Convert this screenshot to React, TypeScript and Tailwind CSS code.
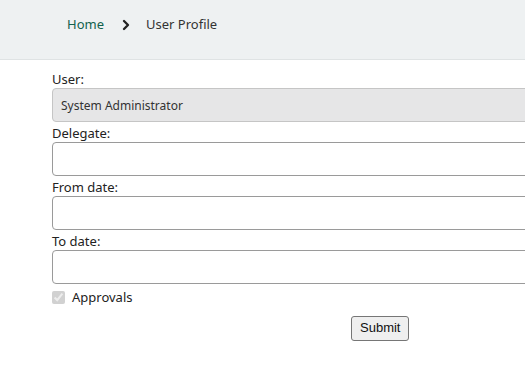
import { ChevronRight } from "lucide-react";

export default function App() {
  const fields = [
    { label: "User:", value: "System Administrator", disabled: true },
    { label: "Delegate:", value: "", disabled: false },
    { label: "From date:", value: "", disabled: false },
    { label: "To date:", value: "", disabled: false },
  ];

  return (
    <main className="w-screen h-screen overflow-hidden bg-white text-[#222] font-['Noto_Sans',sans-serif]">
      {/* Breadcrumb header */}
      <header className="h-[60px] bg-[#eef1f2] border-b border-[#dfe3e4] flex items-start pt-[15px] pl-[67px] text-[13px]">
        <a href="#" className="text-[#12614d]">Home</a>
        <ChevronRight size={16} strokeWidth={3.5} className="ml-[14px] mr-[12px] mt-[2px] text-[#222]" />
        <span className="text-[#333]">User Profile</span>
      </header>

      {/* Form */}
      <form className="pl-[52px] pt-[10px] w-[620px]">
        {fields.map((f) => (
          <div key={f.label} className="flex flex-col">
            <label className="text-[13px] leading-[18px] h-[18px]">{f.label}</label>
            <input
              defaultValue={f.value}
              disabled={f.disabled}
              className={`h-[34px] w-[540px] rounded-[4px] border px-[8px] text-[12px] outline-none ${
                f.disabled
                  ? "bg-[#e6e6e7] border-[#c5c5c5] text-[#333]"
                  : "bg-white border-[#9a9a9a]"
              } mb-[2px]`}
            />
          </div>
        ))}

        <div className="flex items-center mt-[2px]">
          <input type="checkbox" checked disabled readOnly className="w-[13px] h-[13px] m-0 accent-[#999]" />
          <span className="ml-[7px] text-[13px]">Approvals</span>
        </div>

        <div className="flex mt-[8px] pl-[299px]">
          <button
            type="button"
            className="h-[25px] px-[8px] bg-[#efefef] border border-[#767676] rounded-[3px] text-[13px] text-[#111] font-['Liberation_Sans',sans-serif]"
          >
            Submit
          </button>
        </div>
      </form>
    </main>
  );
}
